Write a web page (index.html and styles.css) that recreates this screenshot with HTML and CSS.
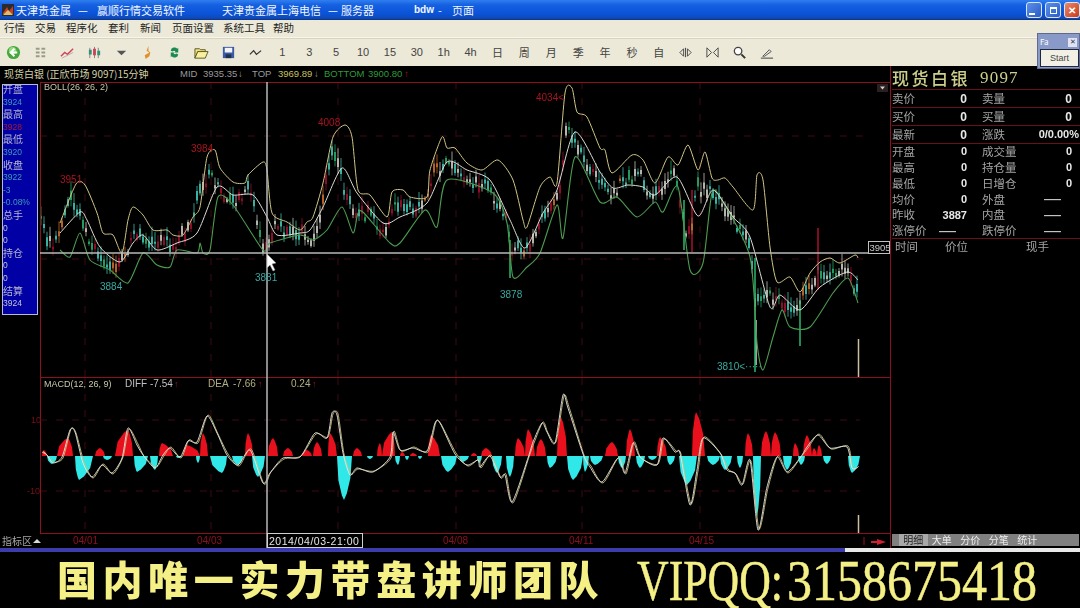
FILE: index.html
```html
<!DOCTYPE html>
<html lang="zh">
<head>
<meta charset="utf-8">
<title>天津贵金属</title>
<link rel="stylesheet" href="styles.css">
</head>
<body>
<div class="screen">
  <header class="titlebar">
    <svg class="appicon" viewBox="0 0 12 12"><rect width="12" height="12" fill="#2a2a30"/><path d="M1 9 5 3l2 4 4-5v8H1z" fill="#c8401c"/><path d="M1 11 6 6l5 5z" fill="#d8c070"/></svg>
    <span class="t1">天津贵金属</span><span class="t2">—</span><span class="t3">赢顺行情交易软件</span>
    <span class="t4">天津贵金属上海电信</span><span class="t5">—</span><span class="t6">服务器</span>
    <span class="t7">bdw</span><span class="t8">-</span><span class="t9">页面</span>
    <span class="winbtns">
      <span class="wb wb-min"><i class="minbar"></i></span>
      <span class="wb wb-res"><i class="resbox"></i></span>
      <span class="wb wb-close">✕</span>
    </span>
  </header>

  <nav class="menubar">
    <span class="m1">行情</span><span class="m2">交易</span><span class="m3">程序化</span><span class="m4">套利</span><span class="m5">新闻</span><span class="m6">页面设置</span><span class="m7">系统工具</span><span class="m8">帮助</span>
  </nav>

  <div class="toolbar">
    <span class="tb"><svg viewBox="0 0 16 16" class="ic"><circle cx="8" cy="8" r="7" fill="#46a83c"/><circle cx="7" cy="6" r="4" fill="#8fdc78"/><path d="M9 4 5 8l4 4M5 8h7" stroke="#fff" stroke-width="2" fill="none"/></svg></span>
    <span class="tb"><svg viewBox="0 0 16 16" class="ic"><path d="M3 3h4v2H3zM9 3h4v2H9zM3 7h4v2H3zM9 7h4v2H9zM3 11h4v2H3zM9 11h4v2H9z" fill="#9a9a88"/></svg></span>
    <span class="tb"><svg viewBox="0 0 16 16" class="ic"><path d="M1 12 5 8l3 2 6-6" stroke="#d04858" stroke-width="1.6" fill="none"/><path d="M2 14 14 8" stroke="#b8a8a8" stroke-width="1"/></svg></span>
    <span class="tb"><svg viewBox="0 0 16 16" class="ic"><path d="M3 3v11M8 2v12M12 3v11" stroke="#8a7a80" stroke-width="1"/><path d="M2 5h3v5H2zM11 6h3v5h-3z" fill="#2f8f78"/><path d="M6.500 4h3v7h-3z" fill="#c84058"/></svg></span>
    <span class="tb"><svg viewBox="0 0 16 16" class="ic"><path d="M3 6h10L8 11z" fill="#555"/></svg></span>
    <span class="tb"><svg viewBox="0 0 16 16" class="ic"><path d="M9 1 7 6l3 2-5 3 1 4 4-3 1-4-2-2z" fill="#e09030"/></svg></span>
    <span class="tb"><svg viewBox="0 0 16 16" class="ic"><path d="M4 6a4 4 0 0 1 7-2l1-1v5H8l1-1a2 2 0 0 0-3 0zM12 10a4 4 0 0 1-7 2l-1 1V8h4l-1 1a2 2 0 0 0 3 0z" fill="#1a8a50"/></svg></span>
    <span class="tb"><svg viewBox="0 0 16 16" class="ic"><path d="M1 4h5l1 1h5v2H4l-3 7z" fill="#f0e080" stroke="#5a5a20"/><path d="M4 7h11l-3 7H1z" fill="#f8f0a0" stroke="#5a5a20"/></svg></span>
    <span class="tb"><svg viewBox="0 0 16 16" class="ic"><rect x="2" y="2" width="12" height="12" fill="#3a5aa8"/><rect x="4" y="3" width="8" height="5" fill="#f4f4f4"/><rect x="5" y="10" width="6" height="4" fill="#20304a"/></svg></span>
    <span class="tb"><svg viewBox="0 0 16 16" class="ic"><path d="M2 10 6 6l3 4 5-4" stroke="#333" stroke-width="1.300" fill="none"/></svg></span>
    <span class="tb">1</span><span class="tb">3</span><span class="tb">5</span><span class="tb">10</span><span class="tb">15</span><span class="tb">30</span><span class="tb">1h</span><span class="tb">4h</span><span class="tb">日</span><span class="tb">周</span><span class="tb">月</span><span class="tb">季</span><span class="tb">年</span><span class="tb">秒</span><span class="tb">自</span>
    <span class="tb"><svg viewBox="0 0 16 16" class="ic"><path d="M6 4v8L2 8zM10 4v8l4-4z" fill="none" stroke="#444"/><path d="M8 3v10" stroke="#444"/></svg></span>
    <span class="tb"><svg viewBox="0 0 16 16" class="ic"><path d="M2 3v10l5-5zM14 3v10L9 8z" fill="none" stroke="#444"/></svg></span>
    <span class="tb"><svg viewBox="0 0 16 16" class="ic"><circle cx="6.500" cy="6.500" r="4" fill="#fff" stroke="#444" stroke-width="1.400"/><path d="m10 10 4 4" stroke="#333" stroke-width="2"/></svg></span>
    <span class="tb"><svg viewBox="0 0 16 16" class="ic"><path d="M2 14h13" stroke="#555" stroke-width="1.200"/><path d="m4 12 7-7 2 2-7 5z" fill="#ddd" stroke="#555"/></svg></span>
  </div>

  <div class="floater">
    <div class="floater-title"><span class="ft-a">Fa</span><span class="ft-x">✕</span></div>
    <div class="start">Start</div>
  </div>

  <main class="terminal">
    <section class="left">
      <div class="info">
        <span class="info-name">现货白银 (正欣市场 9097)15分钟</span>
        <span class="i-mid i1">MID</span><span class="i-mid i2">3935.35</span><span class="i-mid i3">↓</span>
        <span class="i-mid i4">TOP</span><span class="i-top i5">3969.89</span><span class="i-mid i6">↓</span>
        <span class="i-bot i7">BOTTOM</span><span class="i-bot i8">3900.80</span><span class="i-up i9">↑</span>
      </div>
      <div class="plots">
        <aside class="side">
          <div class="bluebox">
            <span class="lb">开盘</span><span class="vl">3924</span>
            <span class="lb">最高</span><span class="vr">3928</span>
            <span class="lb">最低</span><span class="vl">3920</span>
            <span class="lb">收盘</span><span class="vl">3922</span>
            <span class="vl">-3</span><span class="vl">-0.08%</span>
            <span class="lb">总手</span><span class="nm">0</span><span class="nm">0</span>
            <span class="lb">持仓</span><span class="nm">0</span><span class="nm">0</span>
            <span class="lb">结算</span><span class="nm">3924</span>
          </div>
          <div class="zone"><span class="zone-txt">指标区</span><i class="zone-arrow"></i></div>
        </aside>
        <svg id="chart" class="chart" viewBox="40 82 851 466" width="851" height="466">
          <g id="grid" class="grid">
            <path d="M40 136H868M40 259H868M40 420H860M40 491H860"/>
            <path d="M85 82V377M211 82V377M338 82V377M456 82V377M582 82V377M700 82V377M85 378V533M211 378V533M338 378V533M456 378V533M582 378V533M700 378V533"/>
          </g>
          <g id="candles"></g>
          <g id="lines"></g>
          <path class="volbar" d="M858.500 339V377M858.500 515V533"/>
          <path class="frame" d="M40.500 82V533M40 82.500H890M40 377.500H890M40 533.500H890M890.500 66V548"/>
          <path class="cross" d="M267 82V548M40 253H868"/>
          <polygon class="cursor" points="267,254 267,268 270,265 273,271 275,270 272,264 276,263"/>
          <rect class="tag" x="868.500" y="241.500" width="21" height="12"/>
          <text class="tagtxt" x="869.500" y="251">3905</text>
          <rect class="dropbox" x="877" y="84" width="11" height="8"/>
          <path class="droparrow" d="M880 86.500h5l-2.500 3z"/>
          <text class="hi" x="60" y="183">3951</text>
          <text class="hi" x="191" y="152">3984</text>
          <text class="hi" x="318" y="126">4008</text>
          <text class="hi" x="536" y="101">4034&lt;</text>
          <text class="lo" x="100" y="290">3884</text>
          <text class="lo" x="255" y="281">3881</text>
          <text class="lo" x="500" y="298">3878</text>
          <text class="lo" x="717" y="370">3810&lt;·····</text>
          <text class="ind" x="44" y="90">BOLL(26, 26, 2)</text>
          <text class="ind" x="44" y="387">MACD(12, 26, 9)</text>
          <text class="val-w" x="125" y="387">DIFF</text><text class="val-w" x="150" y="387">-7.54</text><text class="up" x="174" y="387">↑</text>
          <text class="val-y" x="208" y="387">DEA</text><text class="val-y" x="233" y="387">-7.66</text><text class="up" x="258" y="387">↑</text>
          <text class="val-y" x="291" y="387">0.24</text><text class="up" x="312" y="387">↑</text>
          <text class="axis-y" x="31" y="423">10</text>
          <text class="axis-y" x="27" y="494">-10</text>
          <text class="date" x="73" y="544">04/01</text>
          <text class="date" x="197" y="544">04/03</text>
          <text class="date" x="443" y="544">04/08</text>
          <text class="date" x="569" y="544">04/11</text>
          <text class="date" x="689" y="544">04/15</text>
          <rect class="timebox" x="267.500" y="533.500" width="95" height="14"/>
          <text class="timetxt" x="269" y="544.500">2014/04/03-21:00</text>
          <path class="up-red" d="M864 537v8"/>
          <path class="arrowpill" d="M871 541h6v-2l9 3-9 3v-2h-6z"/>
        </svg>
      </div>
    </section>

    <section class="quote">
      <h1 class="qhead"><span>现货白银</span><span class="qcode">9097</span></h1>
      <div class="qrow qline"><div class="qc"><span>卖价</span><b>0</b></div><div class="qc"><span>卖量</span><b>0</b></div></div>
      <div class="qrow qline"><div class="qc"><span>买价</span><b>0</b></div><div class="qc"><span>买量</span><b>0</b></div></div>
      <div class="qrow qline"><div class="qc"><span>最新</span><b>0</b></div><div class="qc qwide"><span>涨跌</span><b>0/0.00%</b></div></div>
      <div class="qlist">
        <div class="qrow qs"><div class="qc"><span>开盘</span><b>0</b></div><div class="qc"><span>成交量</span><b>0</b></div></div>
        <div class="qrow qs"><div class="qc"><span>最高</span><b>0</b></div><div class="qc"><span>持仓量</span><b>0</b></div></div>
        <div class="qrow qs"><div class="qc"><span>最低</span><b>0</b></div><div class="qc"><span>日增仓</span><b>0</b></div></div>
        <div class="qrow qs"><div class="qc"><span>均价</span><b>0</b></div><div class="qc"><span>外盘</span><em>—</em></div></div>
        <div class="qrow qs"><div class="qc"><span>昨收</span><b>3887</b></div><div class="qc"><span>内盘</span><em>—</em></div></div>
        <div class="qrow qs"><div class="qc"><span>涨停价</span><em>—</em></div><div class="qc"><span>跌停价</span><em>—</em></div></div>
      </div>
      <div class="qhdr"><span class="qh1">时间</span><span class="qh2">价位</span><span class="qh3">现手</span></div>
      <div class="qtabs"><span class="tab on">明细</span><span class="tab">大单</span><span class="tab">分价</span><span class="tab">分笔</span><span class="tab">统计</span></div>
    </section>
  </main>

  <div class="progress"><div class="prog-a"></div><div class="prog-b"></div></div>

  <footer class="banner">
    <span class="cn">国内唯一实力带盘讲师团队</span>
    <svg class="qq" viewBox="0 0 400 52" width="400" height="52"><text class="qq-txt" x="0" y="48" textLength="146" lengthAdjust="spacingAndGlyphs">VIPQQ:</text><text class="qq-txt" x="150" y="48" textLength="250" lengthAdjust="spacingAndGlyphs">3158675418</text></svg>
  </footer>
</div>
<script src="chart.js"></script>
</body>
</html>
```
FILE: styles.css
```css
* { box-sizing: border-box; }
html, body { margin: 0; padding: 0; background: #000; }
body { font-family: "Noto Sans CJK SC", "Liberation Sans", sans-serif; }
.screen { position: relative; width: 1080px; height: 608px; overflow: hidden; display: flex; flex-direction: column; }

.titlebar { height: 20px; display: flex; align-items: center; padding-left: 2px; color: #f2f6ff; font-size: 11px; line-height: 1;
  background: linear-gradient(#2f7ff0 0, #1560e0 25%, #0a52d8 70%, #1048b0 92%, #0a2f80 100%); }
.titlebar > span { flex: none; }
.appicon { width: 12px; height: 12px; flex: none; margin-right: 2px; }
.t1 { width: 62px; } .t2 { width: 19px; } .t3 { width: 125px; } .t4 { width: 106px; } .t5 { width: 13px; } .t6 { width: 73px; }
.t7 { width: 24px; font-weight: 700; font-family: "Liberation Sans", sans-serif; font-size: 10px; } .t8 { width: 14px; } .t9 { width: 30px; }
.winbtns { margin-left: auto; display: flex; gap: 3px; }
.wb { width: 16px; height: 16px; border-radius: 3px; border: 1px solid #d8e4f8; display: flex; align-items: center; justify-content: center;
  background: linear-gradient(135deg, #5a90ea, #2a5cc8); }
.wb-close { background: linear-gradient(135deg, #e88a6a, #c83a18); color: #fff; font-size: 10px; font-weight: 700; }
.minbar { width: 6px; height: 2px; background: #fff; margin-top: 8px; margin-right: 4px; }
.resbox { width: 7px; height: 7px; border: 1px solid #fff; border-top-width: 2px; }

.menubar { height: 17px; background: #ece9d8; color: #222; font-size: 10.500px; display: flex; align-items: center; line-height: 1; padding-left: 4px; }
.menubar span { flex: none; }
.m1 { width: 31px; } .m2 { width: 31px; } .m3 { width: 42px; } .m4 { width: 32px; } .m5 { width: 32px; } .m6 { width: 51px; } .m7 { width: 50px; } .m8 { width: 30px; }

.toolbar { height: 29px; background: #ece9d8; border-top: 1px solid #f8f6ec; box-shadow: inset 0 1px 0 #d8d4c0; display: flex; align-items: center; color: #444; font-size: 11px; font-family: "Liberation Sans", "Noto Sans CJK SC", sans-serif; }
.tb { width: 26.900px; flex: none; text-align: center; display: flex; justify-content: center; align-items: center; }
.ic { width: 15px; height: 15px; display: block; }

.floater { position: absolute; left: 1037px; top: 33px; width: 43px; height: 36px; background: #8a9ac8; border: 1px solid #606a90; padding: 1px 0 0 2px; }
.floater-title { height: 14px; display: flex; justify-content: space-between; align-items: center; font-size: 8px; color: #fff; padding-right: 2px; line-height: 1; }
.ft-x { background: #dfe4f4; color: #334; width: 9px; height: 9px; text-align: center; font-size: 7px; }
.start { height: 18px; width: 39px; background: #f2f0e4; border: 1px solid #202840; color: #444; font: 9px/16px "Liberation Sans", sans-serif; text-align: center; }

.terminal { height: 482px; background: #000; display: flex; }
.left { width: 891px; flex: none; display: flex; flex-direction: column; }
.info { height: 16px; display: flex; align-items: center; font: 9.500px/1 "Liberation Sans", sans-serif; padding-left: 4px; }
.info span { flex: none; }
.info-name { width: 176px; color: #d4d2a8; font-family: "Noto Sans CJK SC", sans-serif; font-size: 10px; }
.i-mid { color: #9a9a9a; } .i-top { color: #c8c060; } .i-bot { color: #2f9a3a; } .i-up { color: #b01020; }
.i1 { width: 23px; } .i2 { width: 35px; } .i3 { width: 14px; } .i4 { width: 26px; } .i5 { width: 36px; } .i6 { width: 10px; } .i7 { width: 44px; } .i8 { width: 36px; }

.plots { flex: 1; display: flex; min-height: 0; }
.side { width: 40px; flex: none; display: flex; flex-direction: column; justify-content: space-between; padding-top: 2px; filter: blur(.3px); }
.bluebox { margin-left: 2px; width: 36px; height: 231px; background: #0000a4; border: 1px solid #b8b8d8; display: flex; flex-direction: column; font-size: 10px; }
.bluebox span { height: 12.600px; line-height: 12.600px; flex: none; white-space: nowrap; }
.bluebox span:first-child { margin-top: -2px; }
.lb { color: #b4b4cc; }
.vl { color: #3f9ab4; font-size: 8.500px; font-family: "Liberation Sans", sans-serif; }
.vr { color: #a81838; font-size: 8.500px; font-family: "Liberation Sans", sans-serif; }
.nm { color: #c4c4d8; font-size: 8.500px; font-family: "Liberation Sans", sans-serif; }
.zone { height: 15px; color: #a8a8a8; font-size: 10px; line-height: 15px; padding-left: 2px; display: flex; align-items: center; white-space: nowrap; }
.zone-txt { flex: none; }
.zone-arrow { flex: none; width: 0; height: 0; border: 4px solid transparent; border-bottom: 4px solid #d8d8d8; border-top: 0; margin-left: 1px; }

.chart { display: block; overflow: visible; flex: none; filter: blur(.35px); }
.grid path { fill: none; stroke: #3e0a12; stroke-width: 1; stroke-dasharray: 7 9; }
.frame { fill: none; stroke: #8c1020; stroke-width: 1; }
.cross { fill: none; stroke: #b8b8b8; stroke-width: 1.500; }
.cursor { fill: #fff; stroke: #999; stroke-width: .5; }
.tag { fill: #000; stroke: #c0c0c0; }
.tagtxt { fill: #c8c8c8; font: 9.500px "Liberation Sans", sans-serif; }
.dropbox { fill: #2a2020; }
.droparrow { fill: #d0d0d0; }
.volbar { fill: none; stroke: #c8c0a0; stroke-width: 1.500; }
.hi { fill: #a81420; font: 10px "Liberation Sans", sans-serif; }
.lo { fill: #3aa8a0; font: 10px "Liberation Sans", sans-serif; }
.ind { fill: #c8c8a8; font: 9px "Liberation Sans", sans-serif; }
.val-w { fill: #c0c0c0; font: 10px "Liberation Sans", sans-serif; }
.val-y { fill: #b0b080; font: 10px "Liberation Sans", sans-serif; }
.up { fill: #a01020; font: 9px "Liberation Sans", sans-serif; }
.axis-y { fill: #7a1018; font: 9px "Liberation Sans", sans-serif; }
.date { fill: #8c1020; font: 10px "Liberation Sans", sans-serif; }
.timebox { fill: #000; stroke: #d0d0d0; }
.timetxt { fill: #e8e8e8; font: 10.500px "Liberation Sans", sans-serif; letter-spacing: .5px; }
.up-red { stroke: #a01020; stroke-width: 1; fill: none; }
.arrowpill { fill: #d02030; }

.b-upper { fill: none; stroke: #cfc684; stroke-width: 1; stroke-linejoin: round; }
.b-mid { fill: none; stroke: #dcdcd4; stroke-width: 1; stroke-linejoin: round; }
.b-lower { fill: none; stroke: #4c9c50; stroke-width: 1.100; stroke-linejoin: round; }
.m-diff { fill: none; stroke: #e8e8e8; stroke-width: .9; stroke-linejoin: round; }
.m-dea { fill: none; stroke: #c8c078; stroke-width: .9; stroke-linejoin: round; }
.h-red { fill: #e8101c; }
.h-cyan { fill: #30e8e8; }
.c-cyan { stroke: #46d4c0; fill: none; } .c-white { stroke: #d8d8d0; fill: none; } .c-red { stroke: #a81230; fill: none; } .c-orange { stroke: #d87430; fill: none; } .c-green { stroke: #2cb870; fill: none; }

.quote { flex: 1; position: relative; color: #a4a4a4; font-size: 11.500px; line-height: 1; display: flex; flex-direction: column; padding-left: 1px; filter: blur(.25px); }
.qhead { margin: 0; height: 24px; border-bottom: 1px solid #6a1018; display: flex; align-items: center; font-size: 17px; font-weight: 500; color: #cdd08a; letter-spacing: 2.500px; font-family: "Noto Sans CJK SC", serif; }
.qcode { margin-left: 10px; font-family: "Liberation Serif", serif; letter-spacing: 1.200px; font-size: 17px; }
.qrow { display: grid; grid-template-columns: 75px 90px; column-gap: 15px; }
.qline { height: 18px; border-bottom: 1px solid #6a1018; align-items: center; }
.qc { display: flex; justify-content: space-between; align-items: center; }
.qc b { color: #e8e8e8; font-family: "Liberation Sans", sans-serif; font-size: 12px; }
.qc em { font-style: normal; color: #c8c8c8; font-family: "Liberation Sans", sans-serif; padding-right: 11px; font-size: 17px; line-height: 12px; }
.qwide { width: 97px; }
.qwide b { font-size: 11px; }
.qlist { height: 95px; display: flex; flex-direction: column; border-bottom: 1px solid #6a1018; }
.qs { height: 15.800px; align-items: center; flex: none; }
.qs b { font-size: 11px; }
.qhdr { height: 16px; display: flex; align-items: center; }
.qh1 { margin-left: 3px; width: 50px; } .qh2 { width: 81px; }
.qtabs { position: absolute; left: 1px; right: 1px; bottom: 2px; height: 12px; background: #808080; display: flex; padding-left: 7px; font-size: 10px; line-height: 12px; color: #ededed; }
.tab { width: 28.500px; flex: none; text-align: center; }
.tab.on { color: #222; background: #a8a8a8; }

.progress { height: 4px; display: flex; flex: none; }
.prog-a { width: 845px; background: #3c3cac; }
.prog-b { flex: 1; background: #e8e8e8; }

.banner { height: 52px; background: #000; display: flex; align-items: center; padding-left: 57px; color: #f5f085; white-space: nowrap; filter: blur(.4px); }
.cn { font-size: 40px; font-weight: 900; letter-spacing: 5.600px; line-height: 52px; height: 52px; width: 580px; flex: none; font-family: "Noto Sans CJK SC", sans-serif; }
.qq { display: block; flex: none; overflow: visible; }
.qq-txt { font: 56px "Liberation Serif", serif; fill: #f5f085; stroke: #f5f085; stroke-width: .5; }
```
FILE: chart.js
```js
// Draws the BOLL and MACD series of the terminal into #chart.
(function () {
  var NS = 'http://www.w3.org/2000/svg';
  var upper = [60,223,76,184,85,185,97,213,103,233,113,235,122,253,128,220,133,207,143,215,153,230,167,230,173,235,183,235,193,217,200,207,207,157,215,150,220,168,233,182,245,183,248,175,263,162,267,170,272,213,287,222,300,230,307,222,313,217,323,183,333,137,345,125,352,137,358,190,370,195,387,217,392,192,403,190,410,197,427,197,430,170,442,137,447,148,455,148,467,163,482,170,498,160,513,180,523,220,527,227,540,187,550,177,557,183,565,93,572,88,577,112,587,117,600,148,605,150,612,173,632,155,643,160,655,183,668,157,678,165,688,145,698,170,705,152,712,178,718,180,725,178,733,187,753,210,757,175,763,180,770,247,777,282,790,277,800,292,810,273,820,262,830,258,840,263,855,255,858,258];
  var mid = [60,233,80,212,87,220,100,247,120,262,133,243,143,235,157,250,177,243,197,233,217,187,233,195,253,195,267,217,277,235,300,233,310,230,323,207,342,168,357,193,383,223,400,217,427,203,447,162,467,170,490,180,510,220,525,248,543,213,557,190,575,132,600,172,613,188,628,185,643,187,655,195,677,177,698,216,713,190,733,217,750,237,770,307,780,295,800,310,820,287,847,272,858,280];
  var lower = [60,250,70,257,80,233,90,260,110,270,128,283,143,253,157,265,170,267,177,250,197,253,200,243,203,253,210,250,218,197,233,205,263,250,270,243,300,235,313,240,327,230,342,207,353,233,358,213,364,213,390,243,400,243,425,210,437,227,447,180,493,193,507,223,513,277,527,267,540,253,557,205,563,238,575,157,600,202,617,197,637,217,655,202,663,212,678,187,690,270,703,263,712,193,723,202,750,257,757,343,763,370,773,337,782,310,790,327,810,327,833,293,848,278,858,303];
  var track = [41,215,45,235,55,245,62,225,70,195,78,210,90,245,105,265,115,270,125,255,135,230,145,240,160,240,175,245,190,225,200,190,210,175,225,195,240,200,250,185,258,230,265,250,275,225,290,235,300,232,315,240,325,190,333,150,345,190,355,210,370,215,385,235,395,205,405,210,425,205,432,175,445,165,470,180,490,190,505,215,512,250,525,248,532,240,545,210,560,190,567,125,575,140,585,160,600,180,612,195,625,178,640,175,652,198,665,185,675,172,685,230,692,230,696,187,713,193,733,220,750,243,755,297,763,297,777,297,790,310,803,297,818,273,833,273,847,270,857,293];
  var diff = [42,452,47,455,53,463,62,457,70,430,75,432,83,463,92,477,102,465,112,473,122,458,128,428,137,445,143,455,155,468,163,455,170,448,180,457,188,441,197,442,207,416,217,433,227,455,238,465,250,450,263,483,270,473,283,458,300,457,315,433,327,438,332,413,337,415,343,453,350,475,357,468,373,472,390,457,393,432,400,450,413,448,427,451,435,423,440,423,455,454,467,465,478,460,480,467,490,456,500,477,505,475,512,502,528,458,533,442,542,423,547,432,555,443,563,395,568,408,583,454,590,467,602,482,618,458,625,473,633,443,640,457,657,465,663,438,675,452,680,453,690,505,697,470,703,438,720,453,727,470,735,473,742,485,750,460,758,530,767,487,777,457,787,472,800,458,807,447,818,435,830,448,847,447,852,468,858,467];
  var reds = [[42,47,44,450],[57,73,68,438],[95,105,100,448],[115,133,128,430],[159,173,162,443],[183,200,187,445],[200,208,203,433],[245,253,248,433],[268,278,273,438],[283,293,288,448],[302,312,307,450],[313,322,317,442],[328,337,330,433],[353,362,357,448],[377,382,380,443],[382,395,392,432],[400,405,402,452],[410,417,413,453],[428,440,431,435],[471,477,474,453],[481,492,486,448],[515,525,518,438],[525,535,528,429],[536,546,541,439],[557,567,561,417],[605,618,612,442],[626,635,630,429],[657,667,660,437],[692,705,696,412],[745,753,748,433],[761,771,766,431],[771,781,775,432],[793,799,795,443],[803,812,807,435],[812,817,814,448],[817,822,819,445]];
  var cyans = [[47,57,52,464],[75,93,79,480],[103,112,107,460],[134,148,137,472],[150,158,155,470],[176,182,178,458],[196,200,198,463],[210,227,222,473],[232,243,238,465],[252,265,258,477],[337,352,344,500],[367,373,370,459],[395,400,398,465],[405,409,407,460],[418,422,420,459],[441,457,448,472],[459,469,463,462],[477,482,479,463],[492,502,497,473],[506,514,510,477],[547,557,550,468],[567,583,573,480],[583,589,585,472],[590,603,595,465],[618,626,622,468],[636,645,640,468],[648,657,652,460],[667,675,670,465],[679,697,687,485],[707,720,713,465],[720,732,725,470],[737,743,740,468],[753,761,757,517],[783,792,787,470],[798,805,801,465],[823,831,827,464],[848,860,852,473]];
  var longWicks = [['c-green',755,258,372],['c-white',756,320,365],['c-red',818,228,290],['c-green',800,300,346],['c-green',510,240,278],['c-red',692,190,252],['c-green',684,200,250]];

  var seed = 9097;
  function rnd() { seed = (seed * 1103515 + 12345) % 2147483647; return seed / 2147483647; }
  // Smooth curve through the points (Catmull-Rom converted to cubic Beziers).
  function smooth(a) {
    var n = a.length / 2;
    function px(i) { return a[2 * Math.max(0, Math.min(n - 1, i))]; }
    function py(i) { return a[2 * Math.max(0, Math.min(n - 1, i)) + 1]; }
    var s = 'M' + a[0] + ' ' + a[1];
    for (var i = 0; i < n - 1; i++) {
      var k = 1 / 8;
      s += 'C' + (px(i) + (px(i + 1) - px(i - 1)) * k).toFixed(1) + ' ' + (py(i) + (py(i + 1) - py(i - 1)) * k).toFixed(1) + ' ' +
           (px(i + 1) - (px(i + 2) - px(i)) * k).toFixed(1) + ' ' + (py(i + 1) - (py(i + 2) - py(i)) * k).toFixed(1) + ' ' +
           px(i + 1) + ' ' + py(i + 1);
    }
    return s;
  }
  function add(parent, cls, d, width) {
    var p = document.createElementNS(NS, 'path');
    p.setAttribute('class', cls);
    p.setAttribute('d', d);
    if (width) p.setAttribute('stroke-width', width);
    parent.appendChild(p);
  }
  function at(x) {
    for (var i = 0; i < track.length - 2; i += 2) {
      if (x <= track[i + 2]) {
        return track[i + 1] + (track[i + 3] - track[i + 1]) * (x - track[i]) / (track[i + 2] - track[i]);
      }
    }
    return track[track.length - 1];
  }

  var candles = document.getElementById('candles');
  var wicks = { 'c-cyan': '', 'c-white': '', 'c-red': '', 'c-orange': '', 'c-green': '' };
  var bodies = { 'c-cyan': '', 'c-white': '', 'c-red': '', 'c-orange': '', 'c-green': '' };
  for (var x = 41; x < 859; x += 3) {
    var y = at(x), rising = at(x + 6) < y - 2, r = rnd(), c;
    if (rising) c = r < .3 ? 'c-orange' : r < .6 ? 'c-red' : r < .85 ? 'c-white' : 'c-cyan';
    else c = r < .45 ? 'c-cyan' : r < .65 ? 'c-white' : r < .85 ? 'c-green' : 'c-red';
    var cy = y + (rnd() - .5) * 12, h = 2 + rnd() * 8, w = 2 + rnd() * 8;
    bodies[c] += 'M' + x.toFixed(1) + ' ' + (cy - h / 2).toFixed(1) + 'V' + (cy + h / 2).toFixed(1);
    wicks[c] += 'M' + x.toFixed(1) + ' ' + (cy - h / 2 - w).toFixed(1) + 'V' + (cy + h / 2 + w * .7).toFixed(1);
  }
  longWicks.forEach(function (l) { bodies[l[0]] += 'M' + l[1] + ' ' + l[2] + 'V' + l[3]; });
  Object.keys(wicks).forEach(function (k) {
    add(candles, k, wicks[k], .7);
    add(candles, k, bodies[k], 1.5);
  });

  var lines = document.getElementById('lines');
  add(lines, 'b-lower', smooth(lower));
  add(lines, 'b-mid', smooth(mid));
  add(lines, 'b-upper', smooth(upper));

  // Histogram mounds: base, shoulder, rounded peak, shoulder, base.
  function hist(list, cls) {
    var d = '';
    list.forEach(function (b) {
      var base = 456, dy = b[3] - base, l = b[2] - b[0], r = b[1] - b[2];
      d += 'M' + b[0] + ' ' + base +
           'L' + (b[0] + l * .2) + ' ' + (base + dy * .55) +
           'L' + (b[0] + l * .7) + ' ' + (base + dy * .9) +
           'L' + b[2] + ' ' + b[3] +
           'L' + (b[2] + r * .35) + ' ' + (base + dy * .85) +
           'L' + (b[2] + r * .8) + ' ' + (base + dy * .5) +
           'L' + b[1] + ' ' + base + 'Z';
    });
    add(lines, cls, d);
  }
  hist(reds, 'h-red');
  hist(cyans, 'h-cyan');
  var dea = [];
  for (var i = 0; i < diff.length; i += 2) { dea.push(diff[i] + 1, diff[i + 1] + (i % 4 ? 1 : -1)); }
  add(lines, 'm-dea', smooth(dea));
  add(lines, 'm-diff', smooth(diff));
})();
```
